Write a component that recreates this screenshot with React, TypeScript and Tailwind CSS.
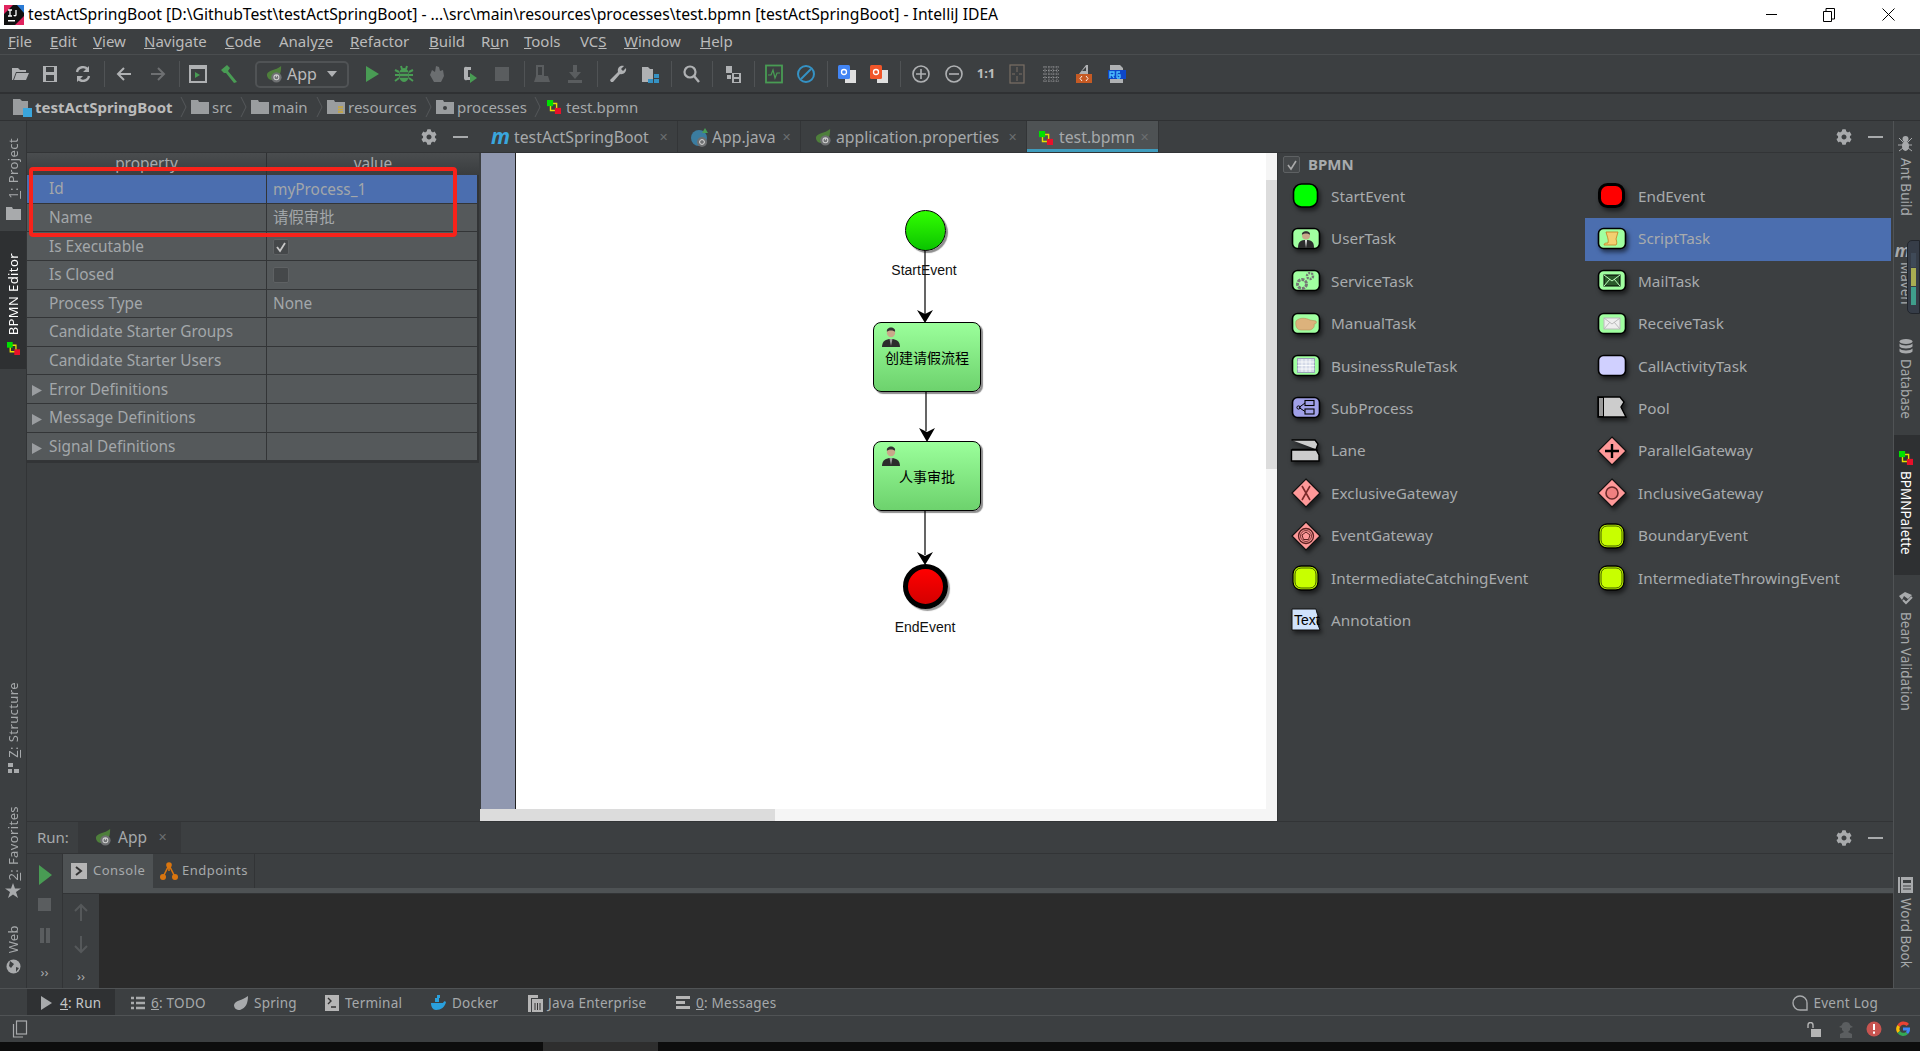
import React from "react";
import { FaCog } from "react-icons/fa";

const G = "#afb1b3";

function Bpmn({ s = 15 }: { s?: number }) {
  return (
    <svg width={s} height={s} viewBox="0 0 16 16" className="shrink-0">
      <path d="M5 4H11V11M4 6V12H11" fill="none" stroke="#e8e000" strokeWidth="1.6" />
      <rect x="0" y="0" width="7" height="7" fill="#00e000" />
      <rect x="9" y="9" width="7" height="7" fill="#e8102a" />
    </svg>
  );
}
function Leaf({ s = 20, c = "#4e7f3b" }: { s?: number; c?: string }) {
  return (
    <svg width={s} height={s} viewBox="0 0 20 20" className="shrink-0">
      <path d="M17 1C17 9 15 14 9 16C4 16 2 13 2 10C3 5 11 6 17 1Z" fill={c} />
      <circle cx="12" cy="13" r="5.5" fill="#6e7072" />
      <circle cx="12" cy="13" r="2.6" fill="none" stroke="#d0d0d0" strokeWidth="1.1" />
      <path d="M12 10.5V13" stroke="#d0d0d0" strokeWidth="1.1" />
    </svg>
  );
}
function I({ cls, children }: { cls: string; children: React.ReactNode }) {
  return (
    <svg width="20" height="20" viewBox="0 0 20 20" className={"shrink-0 " + cls}>
      {children}
    </svg>
  );
}
function Sep({ cls }: { cls: string }) {
  return <div className={"w-px h-[26px] bg-[#505355] shrink-0 " + cls} />;
}
function Menu() {
  return (
    <div className="h-[26px] flex items-center pl-[8px] text-[15px] text-[#bbbbbb] border-b border-[#4a4d4f]">
      <span className="w-[42px]"><u>F</u>ile</span>
      <span className="w-[43px]"><u>E</u>dit</span>
      <span className="w-[51px]"><u>V</u>iew</span>
      <span className="w-[81px]"><u>N</u>avigate</span>
      <span className="w-[54px]"><u>C</u>ode</span>
      <span className="w-[71px]">Analy<u>z</u>e</span>
      <span className="w-[79px]"><u>R</u>efactor</span>
      <span className="w-[52px]"><u>B</u>uild</span>
      <span className="w-[43px]">R<u>u</u>n</span>
      <span className="w-[56px]"><u>T</u>ools</span>
      <span className="w-[44px]">VC<u>S</u></span>
      <span className="w-[76px]"><u>W</u>indow</span>
      <span><u>H</u>elp</span>
    </div>
  );
}
function Toolbar() {
  return (
    <div className="h-[36px] flex items-center pl-[10px] pt-[1px] border-b-[2px] border-[#2f3133] box-content">
      <I cls=""><path d="M2 4H8L10 6H16V8H6L3 16H2ZM6.5 9H19L16 16H4Z" fill={G} /></I>
      <I cls="ml-[10px]"><path d="M3 2H17V18H3ZM6 3V8H14V3ZM6 11V17H14V11Z" fill={G} fillRule="evenodd" /></I>
      <I cls="ml-[13px]"><path d="M4 8A6 6 0 0 1 15 6M16 12A6 6 0 0 1 5 14" fill="none" stroke={G} strokeWidth="2.4" /><path d="M16 2V8H10ZM4 18V12H10Z" fill={G} /></I>
      <Sep cls="ml-[11px]" />
      <I cls="ml-[9px]"><path d="M17 10H5M10 4L4 10L10 16" fill="none" stroke={G} strokeWidth="2" /></I>
      <I cls="ml-[14px]"><path d="M3 10H15M10 4L16 10L10 16" fill="none" stroke="#6e7072" strokeWidth="2" /></I>
      <Sep cls="ml-[11px]" />
      <I cls="ml-[8px]"><rect x="2" y="2" width="16" height="16" fill="none" stroke={G} strokeWidth="2" /><rect x="2" y="2" width="16" height="3" fill={G} /><path d="M7 8L12 11L7 14Z" fill="#499c54" /></I>
      <I cls="ml-[12px]"><path d="M1 6L7 1L10 4L8 7L17 18L14 19L6 9L4 9Z" fill="#499c54" /></I>
      <div className="ml-[15px] w-[94px] h-[27px] shrink-0 border-2 border-[#505355] rounded-[5px] flex items-center pl-[8px] text-[16px] text-[#bbbbbb]">
        <Leaf s={19} />
        <span className="ml-[3px]">App</span>
        <svg width="12" height="8" viewBox="0 0 12 8" className="ml-[9px]"><path d="M1 1H11L6 7Z" fill={G} /></svg>
      </div>
      <I cls="ml-[13px]"><path d="M4 2L17 10L4 18Z" fill="#499c54" /></I>
      <I cls="ml-[12px]"><ellipse cx="10" cy="11" rx="5" ry="7" fill="#499c54" /><path d="M1 6L5 8M19 6L15 8M1 11H5M19 11H15M1 17L5 14M19 17L15 14M7 2L8 5M13 2L12 5" stroke="#499c54" strokeWidth="2" /><path d="M6 9H14M6 13H14" stroke="#3c3f41" strokeWidth="1.5" /></I>
      <I cls="ml-[13px]"><path d="M3 11L5 6L8 8L9 2L12 3L13 7L16 6L17 12L14 18H7Z" fill="#6b6e70" /></I>
      <I cls="ml-[12px]"><path d="M12 3H8A2 2 0 0 0 5 5V14A2 2 0 0 0 8 16H12V13H9V6H12Z" fill={G} /><path d="M11 9L18 14L11 19Z" fill="#499c54" /></I>
      <I cls="ml-[13px]"><rect x="3" y="3" width="14" height="14" fill="#5a5d5f" /></I>
      <Sep cls="ml-[12px]" />
      <I cls="ml-[7px]"><path d="M4 1H12V12H16L18 18H2L4 12Z" fill="#5a5d5f" /><rect x="6" y="3" width="4" height="8" fill="#3c3f41" /></I>
      <I cls="ml-[13px]"><path d="M8 1H12V8H16L10 15L4 8H8Z" fill="#5a5d5f" /><path d="M3 16H17V19H3Z" fill="#5a5d5f" /></I>
      <Sep cls="ml-[12px]" />
      <I cls="ml-[10px]"><path d="M3 18L2 16L10 8C9 4 12 1 16 2L13 5L15 7L18 4C19 8 15 11 12 10L5 18Z" fill={G} /></I>
      <I cls="ml-[12px]"><path d="M2 3H8L10 5H13V18H2Z" fill={G} /><path d="M14 10H19V14H14ZM14 15H19V19H14ZM8 15H13V19H8Z" fill="#3592c4" /></I>
      <Sep cls="ml-[11px]" />
      <I cls="ml-[9px]"><circle cx="9" cy="8" r="5.5" fill="none" stroke={G} strokeWidth="2.2" /><path d="M13 12L18 18" stroke={G} strokeWidth="2.4" /></I>
      <Sep cls="ml-[11px]" />
      <I cls="ml-[9px]"><path d="M4 2H10V9H4ZM2 5H12M5 11H9V15H5Z" fill={G} /><rect x="10" y="9" width="9" height="10" fill={G} /><rect x="12" y="10" width="5" height="3" fill="#3c3f41" /><rect x="12" y="15" width="5" height="3" fill="#3c3f41" /></I>
      <Sep cls="ml-[12px]" />
      <I cls="ml-[9px]"><rect x="2" y="1.5" width="16" height="17" fill="none" stroke="#499c54" strokeWidth="1.8" /><path d="M4 11H7L9 6L11 14L13 9H16" fill="none" stroke="#499c54" strokeWidth="1.2" /></I>
      <I cls="ml-[12px]"><circle cx="10" cy="10" r="8" fill="none" stroke="#3592c4" strokeWidth="2" /><path d="M5 15L15 5" stroke="#3592c4" strokeWidth="2" /></I>
      <Sep cls="ml-[11px]" />
      <I cls="ml-[9px]"><rect x="8" y="6" width="11" height="13" fill="#e0e0e0" /><rect x="1" y="1" width="12" height="14" rx="1.5" fill="#4285f4" /><circle cx="7" cy="8" r="2.5" fill="none" stroke="#fff" strokeWidth="1.3" /></I>
      <I cls="ml-[12px]"><rect x="8" y="6" width="11" height="13" fill="#e0e0e0" /><rect x="1" y="1" width="12" height="14" rx="1.5" fill="#f1562a" /><circle cx="7" cy="8" r="2.5" fill="none" stroke="#fff" strokeWidth="1.3" /></I>
      <Sep cls="ml-[11px]" />
      <I cls="ml-[10px]"><circle cx="10" cy="10" r="8" fill="none" stroke={G} strokeWidth="1.6" /><path d="M10 5V15M5 10H15" stroke={G} strokeWidth="1.6" /></I>
      <I cls="ml-[13px]"><circle cx="10" cy="10" r="8" fill="none" stroke={G} strokeWidth="1.6" /><path d="M5 10H15" stroke={G} strokeWidth="1.6" /></I>
      <span className="ml-[12px] w-[20px] text-center text-[13px] font-bold text-[#bbbbbb] shrink-0">1:1</span>
      <I cls="ml-[11px]"><rect x="3" y="1" width="14" height="18" fill="none" stroke="#7a6e64" strokeWidth="1.2" /><path d="M10 3V8M10 12V17M5 10H8M12 10H15" stroke="#7a6e64" strokeWidth="1" /></I>
      <I cls="ml-[14px]"><path d="M2 3H18M2 6.5H18M2 10H18M2 13.5H18M2 17H18" stroke="#8a8c8e" strokeWidth="1" strokeDasharray="1.5 1" /><path d="M4 2V18M8 2V18M12 2V18M16 2V18" stroke="#8a8c8e" strokeWidth="0.8" strokeDasharray="1.5 1" /></I>
      <I cls="ml-[13px]"><path d="M12 1H14V10H5ZM8 7H12V3Z" fill={G} /><rect x="2" y="10" width="16" height="9" fill="#c55a24" /><path d="M8 12L6 14.5L8 17M12 12L14 14.5L12 17" fill="none" stroke="#fff" strokeWidth="0.9" /></I>
      <I cls="ml-[13px]"><path d="M3 1H13L16 4V8H3ZM3 14H16V19H3Z" fill={G} /><rect x="1" y="6" width="18" height="9" fill="#0d47c9" /><path d="M3 14V8H7V11H3M7 14L5 11M10 14V8H13M13 14V11H11M10 14H13" fill="none" stroke="#4fc3ff" strokeWidth="1.3" /></I>
    </div>
  );
}
function Crumb({ icon, label, bold, w }: { icon: React.ReactNode; label: string; bold?: boolean; w: string }) {
  return (
    <div className={"flex items-center shrink-0 " + w}>
      {icon}
      <span className={"ml-[3px] " + (bold ? "font-bold text-[#bbbbbb]" : "text-[#a6a9ab]")}>{label}</span>
    </div>
  );
}
const FolderI = ({ mark }: { mark?: string }) => (
  <svg width="18" height="16" viewBox="0 0 18 16" className="shrink-0">
    <path d="M0 1H7L8 3H18V15H0Z" fill="#9a9d9f" />
    {mark === "res" && <path d="M11 8H16M11 10.5H16M11 13H16" stroke="#c9a63a" strokeWidth="1.4" />}
    {mark === "pkg" && <circle cx="9" cy="9" r="2" fill="#3c3f41" />}
  </svg>
);
function Chev() {
  return (
    <svg width="8" height="22" viewBox="0 0 8 22" className="shrink-0 mx-[3px]"><path d="M1 1L6 11L1 21" fill="none" stroke="#54575a" strokeWidth="1" /></svg>
  );
}
function Nav() {
  return (
    <div className="h-[27px] flex items-center pl-[12px] text-[15px] border-b border-[#2f3133]">
      <Crumb
        w="w-[165px]"
        bold
        label="testActSpringBoot"
        icon={<svg width="20" height="20" viewBox="0 0 20 20" className="shrink-0"><path d="M1 2H8L10 4H16V18H1Z" fill="#9a9d9f" /><rect x="11" y="11" width="9" height="9" fill="#3aa6dd" /></svg>}
      />
      <Chev />
      <Crumb w="w-[46px]" label="src" icon={<FolderI />} />
      <Chev />
      <Crumb w="w-[62px]" label="main" icon={<FolderI />} />
      <Chev />
      <Crumb w="w-[95px]" label="resources" icon={<FolderI mark="res" />} />
      <Chev />
      <Crumb w="w-[95px]" label="processes" icon={<FolderI mark="pkg" />} />
      <Chev />
      <div className="flex items-center ml-[2px]"><Bpmn s={14} /><span className="ml-[5px] text-[#a6a9ab]">test.bpmn</span></div>
    </div>
  );
}
function VText({ children, cls, left }: { children: React.ReactNode; cls?: string; left?: boolean }) {
  return <span className={"[writing-mode:vertical-rl] whitespace-nowrap leading-none " + (left ? "rotate-180 tracking-[0.4px] " : "") + (cls || "")}>{children}</span>;
}
function LeftStripe() {
  return (
    <div className="w-[27px] shrink-0 flex flex-col items-stretch border-r border-[#323436] text-[13px] text-[#a6a9ab]">
      <div className="h-[110px] flex flex-col items-center bg-[#3f4244] pt-[17px]">
        <VText left><u>1</u>: Project</VText>
        <svg width="15" height="13" viewBox="0 0 15 13" className="mt-[8px]"><path d="M0 0H6L7 2H15V13H0Z" fill="#a8aaac" /></svg>
      </div>
      <div className="h-[138px] bg-[#2e3032] flex flex-col items-center pt-[22px] text-white">
        <VText left>BPMN Editor</VText>
        <div className="mt-[7px]"><Bpmn s={13} /></div>
      </div>
      <div className="flex-1" />
      <div className="flex flex-col items-center pb-[14px]">
        <VText left><u>Z</u>: Structure</VText>
        <svg width="13" height="12" viewBox="0 0 13 12" className="mt-[4px]"><path d="M1 1H6V5H1ZM7 7H12V11H7ZM1 7H5V11H1Z" fill="#a8aaac" /></svg>
        <div className="h-[32px]" />
        <VText left><u>2</u>: Favorites</VText>
        <svg width="16" height="16" viewBox="0 0 16 16" className="mt-[2px]"><path d="M8 0L10 5.5H16L11 9L13 15L8 11.5L3 15L5 9L0 5.5H6Z" fill="#a8aaac" /></svg>
        <div className="h-[26px]" />
        <VText left>Web</VText>
        <svg width="15" height="15" viewBox="0 0 15 15" className="mt-[6px]"><circle cx="7.5" cy="7.5" r="7" fill="#a8aaac" /><path d="M4 2L8 5L5 9L3 7ZM10 8L13 9L10 13Z" fill="#3c3f41" /></svg>
      </div>
    </div>
  );
}
function RightStripe() {
  return (
    <div className="w-[27px] shrink-0 flex flex-col items-center border-l border-[#505355] pr-[3px] text-[13.5px] text-[#a6a9ab] relative">
      <svg width="15" height="17" viewBox="0 0 15 17" className="mt-[14px]"><ellipse cx="7.5" cy="4" rx="3" ry="3" fill="#a8aaac" /><ellipse cx="7.5" cy="11" rx="3.500" ry="5" fill="#a8aaac" /><path d="M1 3L5 7M14 3L10 7M0 10H14M1 16L5 13M14 16L10 13" stroke="#a8aaac" /></svg>
      <VText cls="mt-[6px]">Ant Build</VText>
      <span className="mt-[26px] text-[17px] font-bold italic text-[#a8aaac] leading-none h-[14px] mr-[6px]">m</span>
      <VText cls="mt-[6px]">Maven</VText>
      <svg width="14" height="15" viewBox="0 0 14 15" className="mt-[35px]"><ellipse cx="7" cy="2.500" rx="6.500" ry="2.500" fill="#a8aaac" /><path d="M.5 4.500C2 7 12 7 13.500 4.500V7.500C12 10 2 10 .5 7.500ZM.5 9.500C2 12 12 12 13.500 9.500V12.500C12 15 2 15 .5 12.500Z" fill="#a8aaac" /></svg>
      <VText cls="mt-[5px]">Database</VText>
      <div className="mt-[16px] w-[26px] -mr-[3px] h-[140px] bg-[#2e3032] flex flex-col items-center pt-[16px] pr-[3px] text-white shrink-0">
        <Bpmn s={14} />
        <VText cls="mt-[6px]">BPMNPalette</VText>
      </div>
      <svg width="15" height="14" viewBox="0 0 15 14" className="mt-[16px]"><path d="M1 5L7 1L14 4L10 8L6 5L4 9Z" fill="#a8aaac" /><path d="M5 9L8 12L14 6" fill="none" stroke="#a8aaac" strokeWidth="2" /></svg>
      <VText cls="mt-[7px]">Bean Validation</VText>
      <div className="flex-1" />
      <svg width="15" height="16" viewBox="0 0 15 16"><rect x="0" y="0" width="2" height="16" fill="#a8aaac" /><rect x="3" y="0" width="12" height="16" fill="#a8aaac" /><path d="M5 3H13V6H5Z" fill="#3c3f41" /><path d="M5 9H13M5 12H13" stroke="#3c3f41" strokeWidth="1.2" /></svg>
      <VText cls="mt-[5px] mb-[20px]">Word Book</VText>
      <div className="absolute right-0 top-[119px] w-[13px] h-[74px] rounded-l-[5px] bg-[#363d48] border border-[#22262c] flex flex-col justify-end items-center pb-[8px] gap-[1px]">
        <div className="w-[5px] h-[14px] bg-[#3f4a58]" />
        <div className="w-[5px] h-[18px] bg-[#a8ad52]" />
        <div className="w-[5px] h-[18px] bg-[#3f9e8c]" />
      </div>
    </div>
  );
}
function GearMinus() {
  return (
    <div className="flex items-center">
      <FaCog className="text-[#a8aaac] text-[16px]" />
      <div className="w-[15px] h-[2px] bg-[#a8aaac] ml-[16px]" />
    </div>
  );
}
const rows: { p: string; v?: string; sel?: boolean; arrow?: boolean; check?: "on" | "off" }[] = [
  { p: "Id", v: "myProcess_1", sel: true },
  { p: "Name", v: "请假审批" },
  { p: "Is Executable", check: "on" },
  { p: "Is Closed", check: "off" },
  { p: "Process Type", v: "None" },
  { p: "Candidate Starter Groups" },
  { p: "Candidate Starter Users" },
  { p: "Error Definitions", arrow: true },
  { p: "Message Definitions", arrow: true },
  { p: "Signal Definitions", arrow: true },
];
function LeftPanel() {
  return (
    <div className="w-[454px] shrink-0 flex flex-col relative">
      <div className="h-[32px] flex items-center justify-end pr-[13px] border-b border-[#323436]">
        <GearMinus />
      </div>
      <div className="w-[452px] h-[22px] flex bg-gradient-to-b from-[#4a4d4f] to-[#3a3d3f] text-[#a6a9ab] text-[15.4px] overflow-hidden">
        <div className="w-[240px] border-r border-[#2f3133] text-center leading-[22px]">property</div>
        <div className="flex-1 text-center leading-[22px]">value</div>
      </div>
      <div className="w-[452px] border-b-[2px] border-r-[2px] border-[#323436] text-[15.4px] text-[#a3a7aa]">
        {rows.map((r) => (
          <div key={r.p} className={"h-[28.65px] flex border-b border-[#333537] pt-[1px] " + (r.sel ? "bg-[#4b6eaf]" : "bg-[#55595b]")}>
            <div className="w-[240px] shrink-0 border-r border-[#333537] flex items-center relative pl-[22px] -mt-[1px]">
              {r.arrow && <svg width="10" height="11" viewBox="0 0 10 11" className="absolute left-[5px] top-[10px]"><path d="M0 0L10 5.5L0 11Z" fill="#9a9da0" /></svg>}
              {r.p}
            </div>
            <div className="flex-1 flex items-center pl-[6px]">
              {r.v}
              {r.check && (
                <span className="w-[16px] h-[16px] bg-[#45484a] border border-[#5e6163] rounded-[2px] flex items-center justify-center">
                  {r.check === "on" && <svg width="12" height="12" viewBox="0 0 12 12"><path d="M2 6L5 10L10 2" fill="none" stroke="#c8c8c8" strokeWidth="1.8" /></svg>}
                </span>
              )}
            </div>
          </div>
        ))}
      </div>
      <div className="absolute left-[2px] top-[46px] w-[428px] h-[70px] border-[4px] border-[#f8221a] rounded-[4px]" />
    </div>
  );
}
function Tab({ icon, label, cls, active }: { icon: React.ReactNode; label: string; cls: string; active?: boolean }) {
  return (
    <div className={"h-full flex items-center shrink-0 relative border-r border-[#333537] pt-[2px] " + cls + (active ? " bg-[#4e5254]" : "")}>
      {icon}
      <span className="text-[15.8px] text-[#a6a9ab] whitespace-nowrap ml-[3px]">{label}</span>
      <span className="absolute text-[#6b6e70] text-[11px] right-[9px]">✕</span>
      {active && <div className="absolute left-0 right-0 bottom-0 h-[3px] bg-[#3f9cbd]" />}
    </div>
  );
}
function Person() {
  return (
    <svg width="18" height="21" viewBox="0 0 18 21">
      <path d="M0 21C0 15 4 13 9 13C14 13 18 15 18 21Z" fill="#2c2c2c" />
      <path d="M7.5 13L9 20L10.5 13Z" fill="#9a9a9a" />
      <circle cx="9" cy="7" r="4.2" fill="#c9a88a" />
      <path d="M5 6C3.500 0 14.500 0 13 6C12 4 6 4 5 6Z" fill="#333" />
    </svg>
  );
}
function Task({ cls, label }: { cls: string; label: string }) {
  return (
    <div className={"absolute w-[108px] h-[70px] rounded-[8px] border border-black bg-gradient-to-b from-[#9bff9b] to-[#6dd26d] shadow-[2px_2px_1px_rgba(0,0,0,0.45)] " + cls}>
      <div className="absolute left-[8px] top-[3px]"><Person /></div>
      <div className="absolute left-0 right-0 top-[23px] text-center text-[14px] text-black leading-[22px] [font-family:'Noto_Sans_CJK_SC',sans-serif]">{label}</div>
    </div>
  );
}
function Canvas() {
  // offsets relative to the white canvas
  return (
    <div className="flex-1 relative bg-white overflow-hidden [font-family:'Liberation_Sans',sans-serif] text-[14px] text-[#111]">
      <svg width="751" height="655" className="absolute left-0 top-0">
        <path d="M409 97V162M410 239V278M409 358V402" stroke="#000" strokeWidth="1.2" />
        <path d="M409 170L401 157L409 161L417 157Z" fill="#000" />
        <path d="M411 289L403 275L411 279L419 275Z" fill="#000" />
        <path d="M409 412L401 399L409 403L417 399Z" fill="#000" />
      </svg>
      <div className="absolute left-[389px] top-[57px] w-[41px] h-[41px] rounded-full border border-black bg-gradient-to-b from-[#30ff00] to-[#08c400] shadow-[2px_2px_1px_rgba(0,0,0,0.45)]" />
      <div className="absolute left-[348px] top-[108px] w-[120px] text-center leading-[18px]">StartEvent</div>
      <Task cls="left-[357px] top-[169px]" label="创建请假流程" />
      <Task cls="left-[357px] top-[288px]" label="人事审批" />
      <div className="absolute left-[387px] top-[411px] w-[45px] h-[45px] rounded-full border-[5px] border-black bg-gradient-to-b from-[#ff0000] to-[#d40000] shadow-[2px_2px_1px_rgba(0,0,0,0.4)]" />
      <div className="absolute left-[349px] top-[465px] w-[120px] text-center leading-[18px]">EndEvent</div>
    </div>
  );
}
function Editor() {
  return (
    <div className="w-[797px] shrink-0 flex flex-col">
      <div className="h-[32px] flex items-stretch border-b border-[#323436]">
        <Tab
          cls="w-[197px] pl-[10px]"
          label="testActSpringBoot"
          icon={<span className="w-[20px] text-[#3aa6dd] italic font-bold text-[21px] leading-none -mt-[3px]">m</span>}
        />
        <Tab
          cls="w-[123px] pl-[12px]"
          label="App.java"
          icon={<svg width="19" height="20" viewBox="0 0 19 20"><circle cx="9" cy="10" r="8" fill="#3b7c9f" /><path d="M15 0L18 5H12Z" fill="#499c54" /><circle cx="12" cy="14" r="5" fill="#6e7072" /><circle cx="12" cy="14" r="2.4" fill="none" stroke="#ddd" /></svg>}
        />
        <Tab cls="w-[226px] pl-[13px]" label="application.properties" icon={<Leaf s={19} />} />
        <Tab active cls="w-[132px] pl-[12px]" label="test.bpmn" icon={<span className="mr-[3px]"><Bpmn s={14} /></span>} />
        <div className="flex-1 bg-[#3c3f41]" />
      </div>
      <div className="flex-1 flex min-h-0">
        <div className="w-[35px] shrink-0 bg-[#9098b0] border-r border-[#222]" />
        <div className="flex-1 flex flex-col min-w-0">
          <div className="flex-1 flex min-h-0">
            <Canvas />
            <div className="w-[11px] shrink-0 bg-[#f5f5f5] flex flex-col">
              <div className="h-[27px]" />
              <div className="h-[289px] bg-[#dcdcdc]" />
            </div>
          </div>
          <div className="h-[12px] bg-[#f5f5f5] flex -ml-[36px]">
            <div className="w-[295px] bg-[#dcdcdc]" />
          </div>
        </div>
        <div className="w-[1px] bg-[#323436]" />
      </div>
    </div>
  );
}
const S = "drop-shadow-[2px_3px_2px_rgba(0,0,0,0.55)]";
function PIcon({ children }: { children: React.ReactNode }) {
  return (
    <svg width="34" height="30" viewBox="0 0 34 30" className={S}>
      {children}
    </svg>
  );
}
const box = (fill: string) => <rect x="3.5" y="4.5" width="27" height="20" rx="5" fill={fill} stroke="#000" strokeWidth="1.6" />;
const diamond = <polygon points="17,1 31,15 17,29 3,15" fill="#ff9999" stroke="#111" strokeWidth="1.2" />;
const lime = (
  <>
    <rect x="4" y="3" width="25" height="24" rx="8" fill="#c8ff00" stroke="#000" strokeWidth="1.3" />
    <rect x="6" y="5" width="21" height="20" rx="6" fill="none" stroke="#3f5a00" strokeWidth="1" />
  </>
);
const leftItems: [string, React.ReactNode][] = [
  ["StartEvent", <rect x="4.5" y="3" width="24" height="23" rx="8" fill="#00ff00" stroke="#000" strokeWidth="1.6" />],
  ["UserTask", <>{box("#a0ffa0")}<path d="M9 24C9 17 12 16 17 16C22 16 25 17 25 24Z" fill="#2c2c2c" /><path d="M16 16L17 24L18 16Z" fill="#eee" /><circle cx="17" cy="11.5" r="4" fill="#c9a88a" /><path d="M13 11C12 6 22 6 21 11C20 9 14 9 13 11Z" fill="#333" /></>],
  ["ServiceTask", <>{box("#a0ffa0")}<circle cx="13" cy="18" r="4.5" fill="none" stroke="#777" strokeWidth="3" strokeDasharray="3 1" /><circle cx="21" cy="10" r="3" fill="none" stroke="#777" strokeWidth="2.4" strokeDasharray="2 1" /></>],
  ["ManualTask", <>{box("#a0ffa0")}<path d="M7 12C11 8 17 9 21 11L27 12C28 14 27 15 25 15C26 18 24 20 21 21H12C8 21 6 17 7 12Z" fill="#dcb27c" stroke="#b98f5a" strokeWidth="0.6" /></>],
  ["BusinessRuleTask", <>{box("#a0ffa0")}<rect x="8.5" y="7.5" width="17" height="14" fill="#d4dae8" stroke="#9aa3b8" /><path d="M8.5 11H25.5M8.5 14.5H25.5M8.5 18H25.5M13 8V21M17 8V21M21 8V21" stroke="#fff" strokeWidth="0.8" /></>],
  ["SubProcess", <>{box("#a0a0e8")}<rect x="16" y="7.5" width="9" height="5" fill="none" stroke="#000" strokeWidth="1.1" /><rect x="16" y="16" width="9" height="5" fill="none" stroke="#000" strokeWidth="1.1" /><path d="M16 10L10 14.5L16 18.5" fill="none" stroke="#000" strokeWidth="1" /><circle cx="9.5" cy="14.5" r="1.6" fill="none" stroke="#000" /></>],
  ["Lane", <path d="M2.5 4H26L29 8L27 13.5L30 19V25H2.5V14H29M3 13.5H27" fill="#cccccc" stroke="#000" strokeWidth="1.4" />],
  ["ExclusiveGateway", <>{diamond}<path d="M13 8L21 22M21 8L13 22" stroke="#7a2a2a" strokeWidth="1.6" /></>],
  ["EventGateway", <>{diamond}<circle cx="17" cy="15" r="7.5" fill="none" stroke="#5a2020" strokeWidth="1.3" /><circle cx="17" cy="15" r="5.5" fill="none" stroke="#5a2020" strokeWidth="0.8" /><polygon points="17,11 21,14 19.5,18.5 14.5,18.5 13,14" fill="none" stroke="#5a2020" strokeWidth="1" /></>],
  ["IntermediateCatchingEvent", lime],
  ["Annotation", <><path d="M3 3H27L28 7L30 12L28 16L31 24H3Z" fill="#d0e2fb" stroke="#111" strokeWidth="1" /></>],
];
const rightItems: [string, React.ReactNode][] = [
  ["EndEvent", <rect x="4.5" y="3.5" width="24" height="22" rx="8" fill="#ff0000" stroke="#000" strokeWidth="3" />],
  ["ScriptTask", <>{box("#a0ffa0")}<path d="M11 8H23L21 15C22 18 22 20 21 21H9C9 19 11 19 13 19C14 16 12 12 11 8Z" fill="#f3cf70" stroke="#c48a2a" strokeWidth="0.9" /></>],
  ["MailTask", <>{box("#a0ffa0")}<rect x="9" y="9" width="16" height="11" fill="#2a5a2a" stroke="#000" /><path d="M9 9L17 15L25 9M9 20L15 13M25 20L19 13" fill="none" stroke="#bfffbf" strokeWidth="1" /></>],
  ["ReceiveTask", <>{box("#a0ffa0")}<rect x="9" y="9" width="16" height="11" fill="#eeeeee" stroke="#bbb" /><path d="M9 9L17 15L25 9M9 20L15 13M25 20L19 13" fill="none" stroke="#bbb" strokeWidth="1" /></>],
  ["CallActivityTask", box("#d0d0ff")],
  ["Pool", <><path d="M3 4H25L29 9L26 14L31 24H3Z" fill="#cccccc" stroke="#000" strokeWidth="1.4" /><rect x="3.5" y="4.5" width="5" height="19" fill="#999" stroke="#000" strokeWidth="1" /></>],
  ["ParallelGateway", <>{diamond}<path d="M17 8V22M10 15H24" stroke="#000" strokeWidth="2.4" /></>],
  ["InclusiveGateway", <>{diamond}<circle cx="17" cy="15" r="6" fill="#f08080" stroke="#6a2a2a" strokeWidth="1.6" /></>],
  ["BoundaryEvent", lime],
  ["IntermediateThrowingEvent", lime],
];
function PRow({ label, icon, sel, right }: { label: string; icon: React.ReactNode; sel?: boolean; right?: boolean }) {
  return (
    <div className={"h-[42.45px] flex items-center " + (sel ? "bg-[#4b6eaf]" : "")}>
      <div className={"w-[53px] shrink-0 flex justify-center -mt-[2px] " + (right ? "pl-[1px]" : "pl-[3px]")}>
        {label === "Annotation" ? (
          <div className="relative">
            <PIcon>{icon}</PIcon>
            <span className="absolute left-[5px] top-[5px] text-[14px] leading-[18px] text-black [font-family:'Liberation_Sans',sans-serif]">Text</span>
          </div>
        ) : (
          <PIcon>{icon}</PIcon>
        )}
      </div>
      <span className="text-[15.3px] text-[#a8abad] -mt-[2px]">{label}</span>
    </div>
  );
}
function Palette() {
  return (
    <div className="flex-1 min-w-0 flex flex-col">
      <div className="h-[32px] flex items-center justify-end pr-[10px] border-b border-[#323436]">
        <GearMinus />
      </div>
      <div className="h-[23px] flex items-center pl-[5px]">
        <span className="w-[17px] h-[17px] border border-[#5e6163] bg-[#45484a] rounded-[2px] flex items-center justify-center">
          <svg width="12" height="12" viewBox="0 0 12 12"><path d="M2 6L5 10L10 2" fill="none" stroke="#aaa" strokeWidth="1.6" /></svg>
        </span>
        <span className="ml-[8px] text-[15px] font-bold text-[#a8abad]">BPMN</span>
      </div>
      <div className="flex flex-1">
        <div className="w-[307px] shrink-0">
          {leftItems.map(([l, i]) => <PRow key={l} label={l} icon={i} />)}
        </div>
        <div className="w-[306px] shrink-0">
          {rightItems.map(([l, i]) => <PRow key={l} label={l} icon={i} sel={l === "ScriptTask"} right />)}
        </div>
      </div>
    </div>
  );
}
function RunPanel() {
  return (
    <div className="flex-1 flex flex-col min-h-0 border-t border-[#323436]">
      <div className="h-[32px] flex items-center border-b border-[#323436] text-[15px] text-[#a6a9ab] pr-[10px]">
        <span className="w-[51px] pl-[10px]">Run:</span>
        <div className="h-full w-[103px] bg-[#36383a] flex items-center pl-[16px] relative">
          <Leaf s={19} />
          <span className="ml-[5px] text-[15.5px]">App</span>
          <span className="absolute left-[80px] text-[11px] text-[#6b6e70]">✕</span>
        </div>
        <div className="flex-1" />
        <GearMinus />
      </div>
      <div className="flex-1 flex min-h-0">
        <div className="w-[36px] shrink-0 border-r border-[#323436] flex flex-col items-center pt-[11px]">
          <svg width="14" height="20" viewBox="0 0 14 20"><path d="M1 0L14 10L1 20Z" fill="#499c54" /></svg>
          <div className="w-[13px] h-[13px] bg-[#5a5d5f] mt-[13px]" />
          <div className="flex gap-[2px] mt-[17px]"><div className="w-[4px] h-[15px] bg-[#5a5d5f]" /><div className="w-[4px] h-[15px] bg-[#5a5d5f]" /></div>
          <span className="text-[13px] text-[#a8aaac] mt-[23px] leading-none">››</span>
        </div>
        <div className="flex-1 flex flex-col min-w-0">
          <div className="h-[34px] flex text-[13px] text-[#a6a9ab] tracking-[0.5px]">
            <div className="w-[90px] bg-[#4e5254] flex items-center pl-[8px]">
              <span className="w-[16px] h-[16px] bg-[#b5b5b5] flex items-center justify-center"><svg width="8" height="10" viewBox="0 0 8 10"><path d="M1 1L6 5L1 9" fill="none" stroke="#333" strokeWidth="2" /></svg></span>
              <span className="ml-[6px]">Console</span>
            </div>
            <div className="w-[102px] border-r border-[#323436] flex items-center pl-[7px]">
              <svg width="18" height="20" viewBox="0 0 18 20"><path d="M3 16L9 4L15 16M9 4L9 10" fill="none" stroke="#d9750f" strokeWidth="1.6" /><circle cx="9" cy="4" r="2.8" fill="#d9750f" /><circle cx="3" cy="16" r="3" fill="#d9750f" /><circle cx="15" cy="16" r="3" fill="#d9750f" /></svg>
              <span className="ml-[4px]">Endpoints</span>
            </div>
          </div>
          <div className="h-[6px] bg-[#4e5254] border-b border-[#323436]" />
          <div className="flex-1 flex min-h-0">
            <div className="w-[36px] shrink-0 flex flex-col items-center pt-[9px]">
              <svg width="16" height="18" viewBox="0 0 16 18"><path d="M8 18V2M2 8L8 2L14 8" fill="none" stroke="#55585a" strokeWidth="2" /></svg>
              <svg width="16" height="18" viewBox="0 0 16 18" className="mt-[15px]"><path d="M8 0V16M2 10L8 16L14 10" fill="none" stroke="#55585a" strokeWidth="2" /></svg>
              <span className="text-[13px] text-[#a8aaac] mt-[16px] leading-none">››</span>
            </div>
            <div className="flex-1 bg-[#2b2b2b]" />
          </div>
        </div>
      </div>
    </div>
  );
}
function BottomBar() {
  return (
    <div className="h-[27px] flex items-center pt-[2px] border-t border-[#505355] text-[13.5px] text-[#a6a9ab] tracking-[0.25px] whitespace-nowrap">
      <div className="w-[88px] ml-[27px] -mt-[2px] h-[26px] bg-[#2f3133] flex items-center pt-[2px] pl-[14px] text-[#c4c6c8] shrink-0">
        <svg width="11" height="14" viewBox="0 0 11 14"><path d="M0 0L11 7L0 14Z" fill="#a8aaac" /></svg>
        <span className="ml-[8px]"><u>4</u>: Run</span>
      </div>
      <svg width="14" height="14" viewBox="0 0 14 14" className="ml-[16px]"><path d="M0 2H3M5 2H14M0 7H3M5 7H14M0 12H3M5 12H14" stroke="#a8aaac" strokeWidth="2.4" /></svg>
      <span className="ml-[6px] w-[56px]"><u>6</u>: TODO</span>
      <svg width="16" height="16" viewBox="0 0 16 16" className="ml-[26px]"><path d="M15 1C15 8 13 13 7 15C3 15 1 13 1 10C2 5 9 6 15 1Z" fill="#a8aaac" /></svg>
      <span className="ml-[5px] w-[43px]">Spring</span>
      <svg width="14" height="16" viewBox="0 0 14 16" className="ml-[28px]"><rect width="14" height="16" fill="#b5b5b5" /><path d="M3 3L6 6L3 9M6 12H11" fill="none" stroke="#333" strokeWidth="1.4" /></svg>
      <span className="ml-[6px] w-[58px]">Terminal</span>
      <svg width="17" height="16" viewBox="0 0 17 16" className="ml-[27px]"><path d="M1 8H13C14 6 15 6 16 7C15 12 11 15 6 15C3 15 1 12 1 8Z" fill="#2aa0dc" /><rect x="5" y="3" width="4" height="4" fill="#2aa0dc" /><rect x="7" y="0" width="3" height="3" fill="#2aa0dc" /></svg>
      <span className="ml-[5px] w-[48px]">Docker</span>
      <svg width="15" height="17" viewBox="0 0 15 17" className="ml-[28px]"><path d="M0 0H10V3H3V17H0Z" fill="#b5b5b5" /><rect x="4" y="4" width="11" height="13" fill="#b5b5b5" /><path d="M7 8V15M9.500 8V15M12 8V15" stroke="#333" /></svg>
      <span className="ml-[5px] w-[99px]">Java Enterprise</span>
      <svg width="14" height="14" viewBox="0 0 14 14" className="ml-[29px]"><path d="M0 0H14V3H0ZM0 5H9V8H0ZM0 10H14V13H0Z" fill="#b5b5b5" /></svg>
      <span className="ml-[6px]"><u>0</u>: Messages</span>
      <div className="flex-1" />
      <svg width="16" height="16" viewBox="0 0 16 16"><path d="M8 1A7 7 0 1 0 8 15H15V8A7 7 0 0 0 8 1Z" fill="none" stroke="#a8aaac" strokeWidth="1.4" /></svg>
      <span className="ml-[6px] mr-[42px]">Event Log</span>
    </div>
  );
}
function StatusBar() {
  return (
    <div className="h-[27px] flex items-center border-t border-[#505355] pl-[12px]">
      <svg width="16" height="18" viewBox="0 0 16 18"><rect x="4.5" y="1" width="10" height="13" fill="none" stroke="#a8aaac" strokeWidth="1.2" /><path d="M1.5 4V17H11" fill="none" stroke="#a8aaac" strokeWidth="1.2" /></svg>
      <div className="flex-1" />
      <svg width="15" height="15" viewBox="0 0 15 15"><path d="M1 6V3A2.5 2.5 0 0 1 6 3V6" fill="none" stroke="#b5b5b5" strokeWidth="1.4" /><rect x="4" y="7" width="10" height="8" fill="#b5b5b5" /></svg>
      <svg width="16" height="18" viewBox="0 0 16 18" className="ml-[16px]"><path d="M4 5C4 1 12 1 12 5L15 7L12 8V10L10 12L14 14V18H2V14L6 12L4 10V8L1 7Z" fill="#5b5e60" /></svg>
      <svg width="16" height="16" viewBox="0 0 16 16" className="ml-[12px]"><circle cx="8" cy="8" r="7.5" fill="#c75450" /><rect x="7" y="3" width="2" height="6" fill="#fff" /><rect x="7" y="10.5" width="2" height="2.2" fill="#fff" /></svg>
      <svg width="16" height="16" viewBox="0 0 16 16" className="ml-[13px] mr-[9px]">
        <path d="M14 3A7 7 0 0 0 2.5 4L5 6A4 4 0 0 1 11.5 5Z" fill="#ea4335" />
        <path d="M2.5 4A7 7 0 0 0 2.5 12L5 10A4 4 0 0 1 5 6Z" fill="#fbbc05" />
        <path d="M2.5 12A7 7 0 0 0 13 13L10.8 11A4 4 0 0 1 5 10Z" fill="#34a853" />
        <path d="M8 6.5H15V8C15 10 14.5 11.5 13 13L10.8 11C11.4 10.500 11.700 10 11.900 9.500H8Z" fill="#4285f4" />
      </svg>
    </div>
  );
}
export default function App() {
  return (
    <div className="w-[1920px] h-[1051px] overflow-hidden flex flex-col bg-[#3c3f41] [font-family:'Noto_Sans','Noto_Sans_CJK_SC',sans-serif]">
      <div className="h-[29px] shrink-0 bg-white flex items-center text-[15.7px] text-black">
        <svg width="20" height="20" viewBox="0 0 20 20" className="ml-[4px]">
          <rect width="20" height="20" fill="#111" />
          <path d="M0 0H9L0 9ZM20 20H11L20 11Z" fill="#e0245e" />
          <path d="M20 0V8L13 0Z" fill="#2b7bd6" />
          <path d="M4 5H8M6 5V11M4 11H8M12 5V10C12 11 10 11 10 10" fill="none" stroke="#fff" strokeWidth="1.3" />
          <rect x="4" y="15" width="7" height="1.5" fill="#fff" />
        </svg>
        <span className="ml-[4px] whitespace-nowrap">testActSpringBoot [D:\GithubTest\testActSpringBoot] - ...\src\main\resources\processes\test.bpmn [testActSpringBoot] - IntelliJ IDEA</span>
        <div className="flex-1" />
        <div className="w-[11px] h-px bg-black" />
        <svg width="12" height="14" viewBox="0 0 12 14" className="ml-[46px]"><path d="M.5 3.500H8.500V13.500H.5ZM3 3.500V.5H11.500V11H8.500" fill="none" stroke="#000" /></svg>
        <svg width="13" height="13" viewBox="0 0 13 13" className="ml-[47px] mr-[25px]"><path d="M.5 .5L12.500 12.500M12.500 .5L.5 12.500" stroke="#000" /></svg>
      </div>
      <Menu />
      <Toolbar />
      <Nav />
      <div className="flex-1 flex min-h-0">
        <LeftStripe />
        <div className="flex-1 flex flex-col min-w-0">
          <div className="h-[700px] shrink-0 flex">
            <LeftPanel />
            <Editor />
            <Palette />
          </div>
          <RunPanel />
        </div>
        <RightStripe />
      </div>
      <BottomBar />
      <StatusBar />
      <div className="h-[9px] shrink-0 bg-[#0d0d0d] flex">
        <div className="ml-[543px] w-[115px] bg-[#2e2e2e]" />
      </div>
    </div>
  );
}
